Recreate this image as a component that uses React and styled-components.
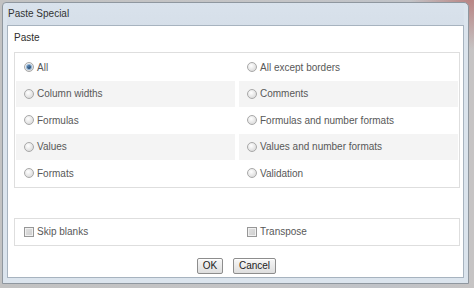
import React from "react";
import styled, { createGlobalStyle } from "styled-components";

const pasteOptions = [
  ["All", "All except borders"],
  ["Column widths", "Comments"],
  ["Formulas", "Formulas and number formats"],
  ["Values", "Values and number formats"],
  ["Formats", "Validation"],
];

const GlobalStyle = createGlobalStyle`
  html, body {
    margin: 0;
    padding: 0;
  }
  body {
    width: 474px;
    height: 288px;
    overflow: hidden;
    background:
      radial-gradient(ellipse 60px 50px at 470px 0px, #b98584 0%, rgba(185,133,132,0) 100%),
      linear-gradient(to right, #c2c2c2 0%, #c4c4c6 60%, #c0c3c8 80%, #c6c4c4 100%);
    font-family: "Liberation Sans", Arial, sans-serif;
  }
  #root {
    padding: 2px;
  }
`;

const Window = styled.div`
  box-sizing: border-box;
  width: 467px;
  height: 282px;
  border: 1px solid #8f979f;
  border-radius: 4px 5px 0 0;
  background: #dbe4ed;
  padding: 0 4px 5px 4px;
  display: flex;
  flex-direction: column;
`;

const TitleBar = styled.div`
  height: 22px;
  line-height: 22px;
  font-size: 10px;
  color: #333;
  padding-left: 1px;
  background: linear-gradient(#d9e2ec, #d6dfe9);
`;

const Panel = styled.div`
  flex: 1;
  background: #fff;
  border: 1px solid #a7b3bf;
  padding: 0 3px 0 6px;
  display: flex;
  flex-direction: column;
`;

const Label = styled.div`
  font-size: 10px;
  line-height: 24px;
  color: #2e2e2e;
  margin-bottom: 2px;
`;

const Box = styled.div`
  border: 1px solid #dedede;
  padding: ${(p) => (p.$tight ? "0 1px" : "1px 1px 0")};
  display: grid;
  grid-template-columns: 1fr 1fr;
  column-gap: 4px;
  grid-auto-rows: ${(p) => (p.$tight ? "26px" : "26.5px")};
  margin-top: ${(p) => p.$gap || 0}px;
`;

const Cell = styled.label`
  display: flex;
  align-items: center;
  gap: 3px;
  padding-left: 8px;
  background: ${(p) => (p.$shade ? "#f4f4f4" : "transparent")};
  font-size: 10px;
  color: #585858;
`;

const Radio = styled.span`
  box-sizing: border-box;
  width: 10px;
  height: 10px;
  border-radius: 50%;
  border: 1px solid #a8a8a8;
  background: radial-gradient(circle at 40% 35%, #ffffff 0%, #e6e6e6 55%, #d2d2d2 100%);
  display: flex;
  align-items: center;
  justify-content: center;
  flex-shrink: 0;

  &::after {
    content: "";
    display: ${(p) => (p.$checked ? "block" : "none")};
    width: 4px;
    height: 4px;
    border-radius: 50%;
    background: radial-gradient(circle at 40% 35%, #4f7fb0 0%, #17385c 80%);
    box-shadow: 0 0 0 1px #8fb4d8;
  }
`;

const Check = styled.span`
  box-sizing: border-box;
  width: 10px;
  height: 10px;
  border: 1px solid #979797;
  background: linear-gradient(135deg, #e2e2e2, #cdcdcd);
  box-shadow: inset 0 0 0 1px #f0f0f0;
  flex-shrink: 0;
`;

const Buttons = styled.div`
  display: flex;
  justify-content: center;
  gap: 10px;
  margin-top: 12px;
  padding-right: 1px;
`;

const Button = styled.button`
  box-sizing: border-box;
  height: 16px;
  min-width: ${(p) => p.$w}px;
  padding: 0 4px;
  font-family: "Liberation Sans", Arial, sans-serif;
  font-size: 10px;
  color: #222;
  line-height: 14px;
  border: 1px solid #8d8d8d;
  border-radius: 2px;
  background: linear-gradient(#f7f7f7, #dedede);
  box-shadow: inset 0 1px 0 #fff;
`;

const App = () => {
  return (
    <>
      <GlobalStyle />
      <Window>
        <TitleBar>Paste Special</TitleBar>
        <Panel>
          <Label>Paste</Label>
          <Box>
            {pasteOptions.map((pair, row) =>
              pair.map((text, col) => (
                <Cell key={text} $shade={row % 2 === 1}>
                  <Radio $checked={row === 0 && col === 0} />
                  {text}
                </Cell>
              ))
            )}
          </Box>
          <Box $tight $gap={30}>
            <Cell>
              <Check />
              Skip blanks
            </Cell>
            <Cell>
              <Check />
              Transpose
            </Cell>
          </Box>
          <Buttons>
            <Button $w={26}>OK</Button>
            <Button $w={43}>Cancel</Button>
          </Buttons>
        </Panel>
      </Window>
    </>
  );
};

export default App;
